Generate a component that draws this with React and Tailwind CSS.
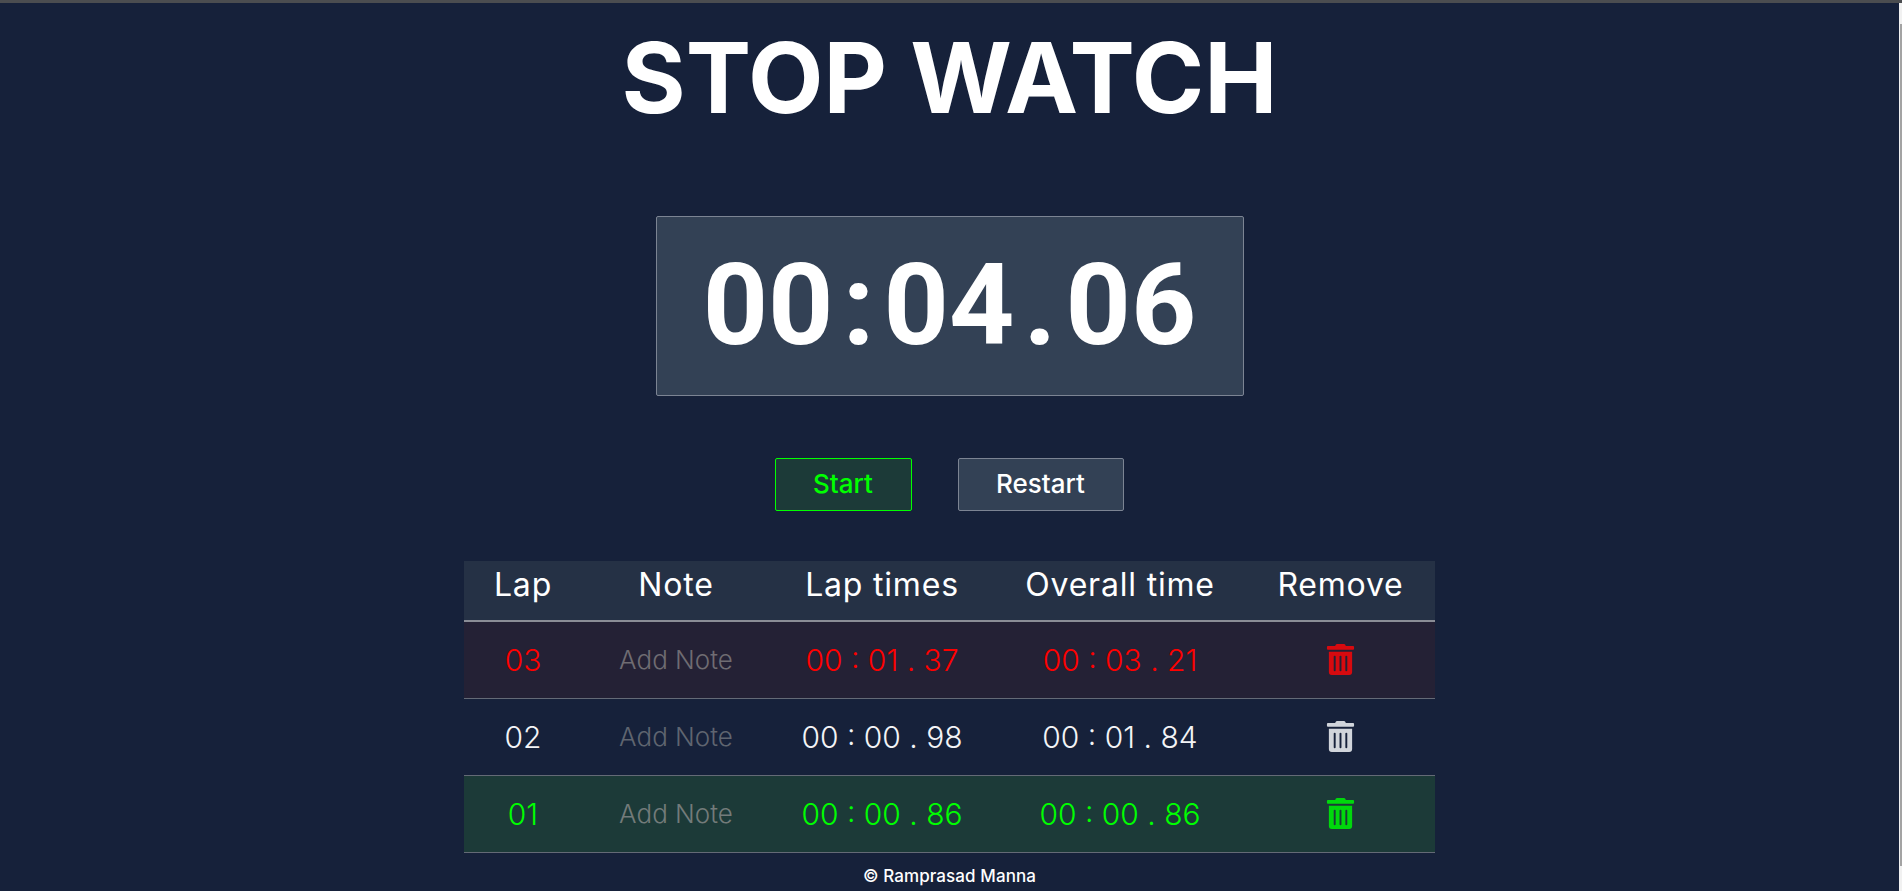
import React from "react";
import { FaTrashAlt } from "react-icons/fa";

const laps = [
  {
    id: "03",
    lap: "00 : 01 . 37",
    overall: "00 : 03 . 21",
    row: "bg-[#242135]",
    text: "text-[#ff0000]",
    note: "placeholder:text-[#6f6c72]",
    icon: "text-[#d70a0f]",
  },
  {
    id: "02",
    lap: "00 : 00 . 98",
    overall: "00 : 01 . 84",
    row: "bg-[#16213a]",
    text: "text-[#f3f4f6]",
    note: "placeholder:text-[#5f6570]",
    icon: "text-[#d1d5db]",
  },
  {
    id: "01",
    lap: "00 : 00 . 86",
    overall: "00 : 00 . 86",
    row: "bg-[#1c3a38]",
    text: "text-[#00ff00]",
    note: "placeholder:text-[#737b7a]",
    icon: "text-[#00d80c]",
  },
];

const columns = "grid grid-cols-[118px_188px_224px_252px_189px] items-center text-center";

export default function App() {
  return (
    <div className="flex h-[891px] flex-col overflow-hidden bg-[#16213a] font-['Inter',sans-serif] text-white">
      <div className="h-[3px] shrink-0 bg-[#4b4d50]" />
      <div className="flex min-h-0 flex-1">
        <main className="min-w-0 flex-1">
          <h1 className="mt-[17px] text-center text-[98px] leading-[116px] font-bold">STOP WATCH</h1>

          <div className="mx-auto mt-[80px] flex h-[180px] w-[588px] items-center justify-center gap-[9px] rounded-[2px] border border-[#7c8493] bg-[#334155] pb-[1px] font-['Roboto',sans-serif] text-[114px] font-bold">
            <span>00</span>
            <span>:</span>
            <span>04</span>
            <span>.</span>
            <span>06</span>
          </div>

          <div className="mt-[62px] flex justify-center gap-[46px] pr-[1px] text-[26px] leading-[30px] font-medium">
            <button className="h-[53px] w-[137px] rounded-[2px] border border-[#00ff00] bg-[#1c3a38] pb-[2px] text-[#00ff00]">Start</button>
            <button className="h-[53px] w-[166px] rounded-[2px] border border-[#7c8493] bg-[#334155] pb-[2px] text-white">Restart</button>
          </div>

          <div className="mx-auto mt-[50px] w-[971px]">
            <div className={`${columns} h-[61px] border-b-2 border-[#8a8d96] bg-[#253145] pb-[13px] text-[32px] tracking-[0.8px]`}>
              <div>Lap</div>
              <div>Note</div>
              <div>Lap times</div>
              <div>Overall time</div>
              <div>Remove</div>
            </div>
            {laps.map((lap) => (
              <div key={lap.id} className={`${columns} ${lap.row} ${lap.text} h-[77px] border-b border-[#646a76] text-[30px] font-light`}>
                <div>{lap.id}</div>
                <div className="pb-[3px]">
                  <input placeholder="Add Note" className={`${lap.note} w-full bg-transparent text-center text-[26px] font-light outline-none`} />
                </div>
                <div>{lap.lap}</div>
                <div>{lap.overall}</div>
                <div className={`flex justify-center pb-[2px] ${lap.icon}`}>
                  <FaTrashAlt size={31} />
                </div>
              </div>
            ))}
          </div>

          <p className="mt-[11px] text-center text-[17px] font-medium tracking-[0.1px]">© Ramprasad Manna</p>
        </main>

        {/* thin browser scrollbar at the right edge */}
        <div className="w-[3px] shrink-0 bg-[#f1f1f1] pt-[21px] pl-[1px]">
          <div className="h-[842px] bg-[#a3a3a3]" />
        </div>
      </div>
    </div>
  );
}
